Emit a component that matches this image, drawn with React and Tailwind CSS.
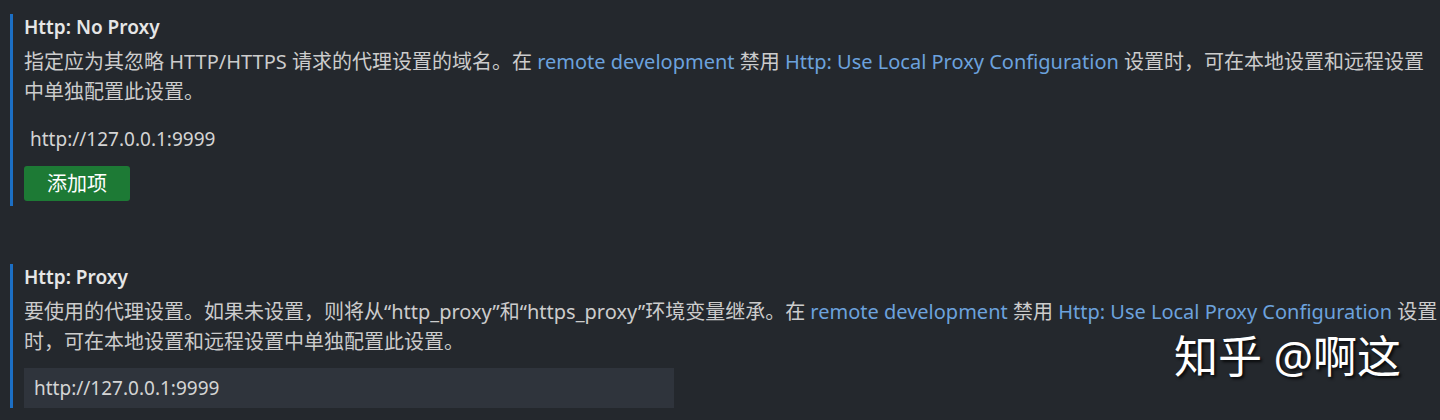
export default function App() {
  const font = { fontFamily: '"Noto Sans", "Noto Sans CJK SC", sans-serif' };
  const link = "text-[#6ca2dd]";
  return (
    <div className="relative w-[1440px] h-[420px] overflow-hidden bg-[#24282d] text-[#cccccc]" style={font}>
      <div className="pt-[14px] pl-[10px] pr-[4px]">
        <div className="border-l-[3px] border-[#1c6fc4] pl-[11px] pb-[5px]">
          <div className="text-[19px] leading-[26px] font-semibold text-[#e6e6e6]">
            Http: <span>No Proxy</span>
          </div>
          <div className="mt-[7px] text-[20px] leading-[30px]">
            指定应为其忽略 HTTP/HTTPS 请求的代理设置的域名。在 <span className={link}>remote development</span> 禁用 <span className={link}>Http: Use Local Proxy Configuration</span> 设置时，可在本地设置和远程设置中单独配置此设置。
          </div>
          <div className="mt-[19px] pl-[6px] text-[19px] leading-[26px] text-[#d4d4d4]">http://127.0.0.1:9999</div>
          <button className="mt-[14px] h-[35px] w-[106px] rounded-[3px] bg-[#1d7a35] text-[20px] text-white">添加项</button>
        </div>
      </div>
      <div className="pt-[58px] pl-[10px] pr-0">
        <div className="border-l-[3px] border-[#1c6fc4] pl-[11px]">
          <div className="text-[19px] leading-[26px] font-semibold text-[#e6e6e6]">Http: Proxy</div>
          <div className="mt-[7px] text-[20px] leading-[30px]">
            要使用的代理设置。如果未设置，则将从“http_proxy”和“https_proxy”环境变量继承。在 <span className={link}>remote development</span> 禁用 <span className={link}>Http: Use Local Proxy Configuration</span> 设置时，可在本地设置和远程设置中单独配置此设置。
          </div>
          <div className="mt-[11px] w-[650px] h-[40px] bg-[#2f343c] flex items-center pl-[10px] text-[19px] text-[#d4d4d4]">http://127.0.0.1:9999</div>
        </div>
      </div>
      <div className="absolute left-[1174px] top-[330px] text-[44px] leading-[52px] text-white [text-shadow:2px_2px_3px_rgba(0,0,0,0.8)]">
        知乎 @啊这
      </div>
    </div>
  );
}
